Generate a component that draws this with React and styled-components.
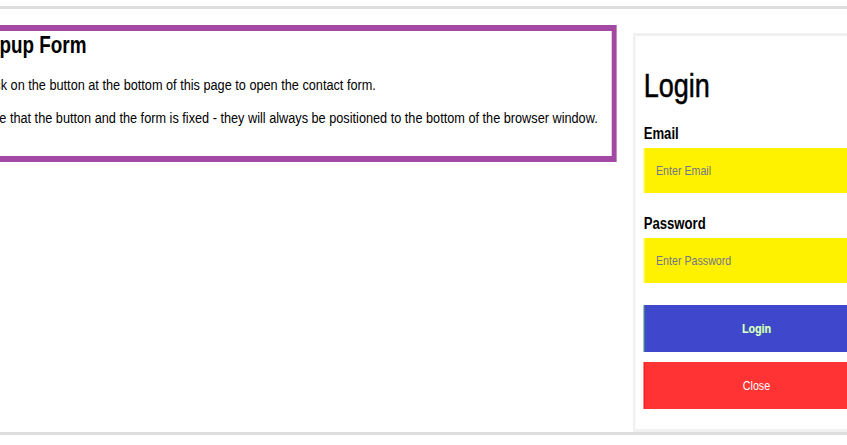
import React from 'react';
import styled, { createGlobalStyle } from 'styled-components';

// the reference is drawn with a narrow face; no narrow font is installed,
// so the whole page is squeezed horizontally instead
const SQUEEZE = 0.82;

const GlobalStyle = createGlobalStyle`
  html, body {
    margin: 0;
    overflow: hidden;
    background: #ffffff;
  }
  body {
    font-family: "Liberation Sans", Arial, sans-serif;
    color: #000;
  }
`;

const Page = styled.div`
  width: ${Math.round(847 / SQUEEZE)}px;
  transform: scaleX(${SQUEEZE});
  transform-origin: 0 0;
`;

const Frame = styled.div`
  margin-top: 6px;
  height: 423px;
  border-top: 3px solid #dddddd;
  border-bottom: 3px solid #dddddd;
  overflow: hidden;
`;

const Row = styled.div`
  display: flex;
  align-items: flex-start;
  padding-top: 16px;
`;

const InfoPanel = styled.div`
  flex-shrink: 0;
  box-sizing: border-box;
  width: 799px;
  margin-left: -47px;
  border: 6px solid #a349a4;
  padding: 2px 16px 14px 16px;
`;

const Title = styled.h2`
  margin: 0 0 18px -5px;
  font-size: 23px;
  line-height: 25px;
  font-weight: bold;
`;

const Text = styled.p`
  margin: 15px 0;
  font-size: 15.5px;
  white-space: nowrap;
`;

const Popup = styled.div`
  flex-shrink: 0;
  box-sizing: border-box;
  width: 300px;
  margin: 8px 0 0 20px;
  border: 3px solid #f1f1f1;
  padding: 10px;
  background: #ffffff;
`;

const Heading = styled.h1`
  margin: 21px 0;
  font-size: 33px;
  line-height: 37px;
  font-weight: normal;
  -webkit-text-stroke: 0.5px #000;
`;

const Label = styled.label`
  display: block;
  font-size: 16px;
  font-weight: bold;
`;

const Field = styled.input`
  display: block;
  box-sizing: border-box;
  width: 100%;
  margin: 5px 0 22px;
  padding: 15px 14px;
  border: none;
  border-left: 1px solid #fff7a8;
  background: #fff200;
  font-family: inherit;
  font-size: 13px;
  outline: none;

  &::placeholder {
    color: #74748a;
  }
`;

const Button = styled.button`
  display: block;
  box-sizing: border-box;
  width: 100%;
  margin-bottom: 10px;
  padding: 16px 20px;
  border: none;
  border-left: 1px solid ${(props) => props.$edge};
  background: ${(props) => props.$bg};
  color: ${(props) => props.$fg};
  font-family: inherit;
  font-size: 13px;
  line-height: 15px;
  font-weight: ${(props) => (props.$bold ? 'bold' : 'normal')};
  text-shadow: ${(props) => (props.$bold ? '1px 0 #3f9a4a' : 'none')};
  cursor: pointer;
`;

export default function App() {
  return (
    <>
      <GlobalStyle />
      <Page>
        <Frame>
          <Row>
            <InfoPanel>
              <Title>Popup Form</Title>
              <Text>Click on the button at the bottom of this page to open the contact form.</Text>
              <Text>
                Note that the button and the form is fixed - they will always be positioned to the bottom of the browser window.
              </Text>
            </InfoPanel>
            <Popup>
              <Heading>Login</Heading>
              <Label htmlFor="email">Email</Label>
              <Field id="email" type="text" placeholder="Enter Email" />
              <Label htmlFor="psw">Password</Label>
              <Field id="psw" type="password" placeholder="Enter Password" />
              <Button type="submit" $bg="#3f48cc" $fg="#e3fbe3" $edge="#4caf50" $bold>
                Login
              </Button>
              <Button type="button" $bg="#ff3333" $fg="#ffffff" $edge="#ee1111">
                Close
              </Button>
            </Popup>
          </Row>
        </Frame>
      </Page>
    </>
  );
}
